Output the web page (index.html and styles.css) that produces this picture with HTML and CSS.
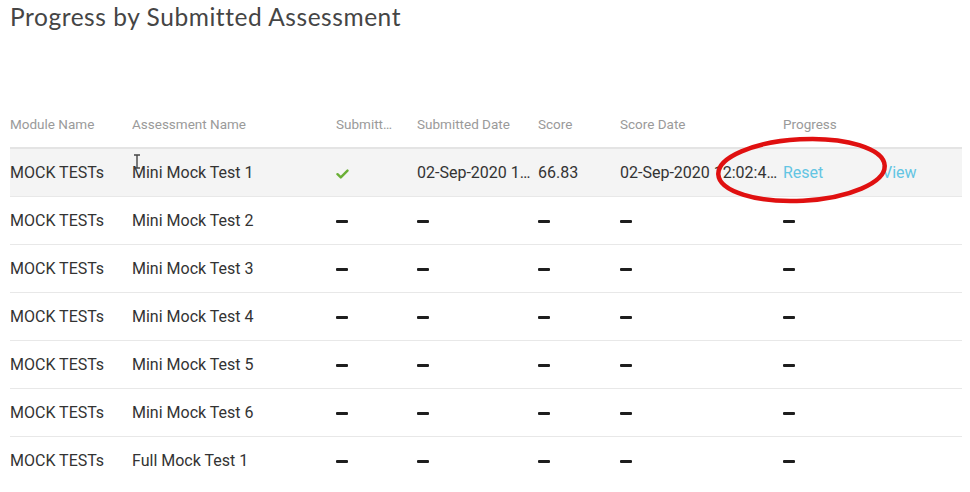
FILE: index.html
```html
<!DOCTYPE html>
<html lang="en">
<head>
  <meta charset="UTF-8">
  <meta name="viewport" content="width=device-width, initial-scale=1.0">
  <title>Progress by Submitted Assessment</title>
  <link rel="stylesheet" href="styles.css">
</head>
<body>
  <div class="page">
    <h1 class="title">Progress by Submitted Assessment</h1>
    <table class="grid">
      <colgroup>
        <col class="c-module">
        <col class="c-name">
        <col class="c-sub">
        <col class="c-date">
        <col class="c-score">
        <col class="c-sdate">
        <col class="c-prog">
        <col class="c-view">
      </colgroup>
      <thead>
        <tr>
          <th>Module Name</th>
          <th>Assessment Name</th>
          <th>Submitted</th>
          <th>Submitted Date</th>
          <th>Score</th>
          <th>Score Date</th>
          <th>Progress</th>
          <th></th>
        </tr>
      </thead>
      <tbody>
        <tr class="active">
          <td>MOCK TESTs</td>
          <td class="name-cell">
            <svg class="cursor" width="8" height="15" viewBox="0 0 8 15"><path d="M1 1h6M4 1v13M1 14h6" stroke="#444" stroke-width="1.4" fill="none"/></svg>
            Mini Mock Test 1
          </td>
          <td><svg class="check" width="13" height="10" viewBox="0 0 13 10"><path d="M1.5 5.2l3.3 3.2L11.5 1.6" stroke="#6aaf35" stroke-width="2.4" fill="none" stroke-linecap="round" stroke-linejoin="round"/></svg></td>
          <td>02-Sep-2020 12:02:41 PM</td>
          <td>66.83</td>
          <td>02-Sep-2020 12:02:41 PM</td>
          <td class="prog-cell">
            <a href="#" class="link">Reset</a>
            <svg class="mark" width="176" height="72" viewBox="0 0 176 72"><ellipse cx="85.5" cy="35" rx="83.3" ry="30.8" transform="rotate(-3 85.5 35)" stroke="#e01010" stroke-width="4.5" fill="none"/></svg>
          </td>
          <td><a href="#" class="link">View</a></td>
        </tr>
        <tr>
          <td>MOCK TESTs</td><td>Mini Mock Test 2</td>
          <td><span class="dash"></span></td><td><span class="dash"></span></td><td><span class="dash"></span></td><td><span class="dash"></span></td><td><span class="dash"></span></td><td></td>
        </tr>
        <tr>
          <td>MOCK TESTs</td><td>Mini Mock Test 3</td>
          <td><span class="dash"></span></td><td><span class="dash"></span></td><td><span class="dash"></span></td><td><span class="dash"></span></td><td><span class="dash"></span></td><td></td>
        </tr>
        <tr>
          <td>MOCK TESTs</td><td>Mini Mock Test 4</td>
          <td><span class="dash"></span></td><td><span class="dash"></span></td><td><span class="dash"></span></td><td><span class="dash"></span></td><td><span class="dash"></span></td><td></td>
        </tr>
        <tr>
          <td>MOCK TESTs</td><td>Mini Mock Test 5</td>
          <td><span class="dash"></span></td><td><span class="dash"></span></td><td><span class="dash"></span></td><td><span class="dash"></span></td><td><span class="dash"></span></td><td></td>
        </tr>
        <tr>
          <td>MOCK TESTs</td><td>Mini Mock Test 6</td>
          <td><span class="dash"></span></td><td><span class="dash"></span></td><td><span class="dash"></span></td><td><span class="dash"></span></td><td><span class="dash"></span></td><td></td>
        </tr>
        <tr class="last">
          <td>MOCK TESTs</td><td>Full Mock Test 1</td>
          <td><span class="dash"></span></td><td><span class="dash"></span></td><td><span class="dash"></span></td><td><span class="dash"></span></td><td><span class="dash"></span></td><td></td>
        </tr>
      </tbody>
    </table>
  </div>
</body>
</html>
```

FILE: styles.css
```css
body {
  margin: 0;
  padding: 0;
  background: #fff;
  font-family: Roboto, 'Liberation Sans', Arial, sans-serif;
  overflow: hidden;
}
.page {
  padding: 0 8px 0 10px;
}
.title {
  margin: 0;
  padding-top: 2px;
  height: 98px;
  font-family: Lato, 'Open Sans', sans-serif;
  font-weight: 400;
  font-size: 24.5px;
  line-height: 30px;
  color: #454545;
  letter-spacing: 0.55px;
}
.grid {
  width: 952px;
  border-collapse: collapse;
  table-layout: fixed;
}
.c-module { width: 122px; }
.c-name { width: 204px; }
.c-sub { width: 81px; }
.c-date { width: 121px; }
.c-score { width: 82px; }
.c-sdate { width: 163px; }
.c-prog { width: 99px; }
.c-view { width: 80px; }
th, td {
  padding: 0 4px 0 0;
  text-align: left;
  white-space: nowrap;
  overflow: hidden;
  text-overflow: ellipsis;
}
th {
  height: 47px;
  padding-right: 20px;
  font-size: 13.5px;
  font-weight: 400;
  color: #9a9a9a;
  border-bottom: 2px solid #e4e4e4;
}
td {
  height: 47px;
  font-size: 16px;
  color: #333;
  border-bottom: 1px solid #e8e8e8;
}
tr.active td {
  background: #f4f4f4;
}
tr.last td {
  border-bottom: none;
}
.name-cell, .prog-cell {
  position: relative;
  overflow: visible;
}
.cursor {
  position: absolute;
  left: 1px;
  top: 5px;
}
.check {
  display: block;
  margin-top: 2px;
}
.dash {
  display: inline-block;
  width: 12px;
  height: 3px;
  border-radius: 1px;
  background: #1e1e1e;
  vertical-align: middle;
}
.link {
  color: #63c5e3;
  text-decoration: none;
}
.mark {
  position: absolute;
  left: -67px;
  top: -14px;
  z-index: 2;
}
```
